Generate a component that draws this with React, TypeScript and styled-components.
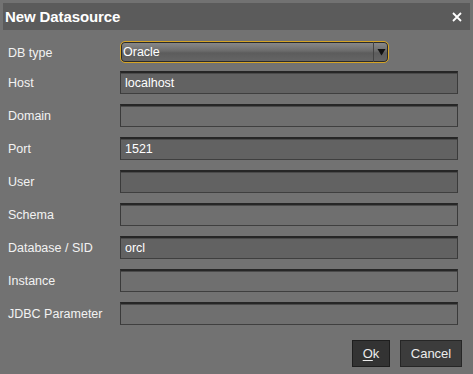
import React from "react";
import styled, { createGlobalStyle } from "styled-components";

const Global = createGlobalStyle`
  html, body { margin: 0; padding: 0; background: #727272; }
  body { font-family: "Liberation Sans", Arial, sans-serif; }
  * { box-sizing: border-box; }
`;

const Window = styled.div`
  width: 473px;
  height: 374px;
  background: #727272;
  padding: 3px 3px 0 3px;
  display: flex;
  flex-direction: column;
`;

const TitleBar = styled.div`
  height: 27px;
  background: #5b5b5b;
  display: flex;
  align-items: center;
  justify-content: space-between;
  padding: 0 8px 0 2px;
`;

const Title = styled.div`
  color: #ffffff;
  font-weight: bold;
  font-size: 15px;
  letter-spacing: -0.1px;
`;

const CloseButton = styled.button`
  width: 10px;
  height: 10px;
  padding: 0;
  border: 0;
  background: transparent;
  display: flex;
  align-items: center;
  justify-content: center;
`;

const Form = styled.div`
  display: flex;
  flex-direction: column;
  gap: 10px;
  padding: 11px 12px 0 5px;
`;

const Row = styled.div<{ $first?: boolean }>`
  display: grid;
  grid-template-columns: 112px 1fr;
  align-items: center;
  height: ${(p) => (p.$first ? "22px" : "23px")};
  margin-bottom: ${(p) => (p.$first ? "-2px" : "0")};
`;

const Label = styled.label`
  color: #f2f2f2;
  font-size: 12.5px;
  padding-top: 1px;
`;

const Combo = styled.div`
  width: 269px;
  height: 22px;
  border: 1.5px solid #d6a424;
  border-radius: 5px;
  box-shadow: inset 0 0 0 1px #2a2a2a;
  background: linear-gradient(#8c8c8c 0%, #6b6b6b 45%, #5c5c5c 55%, #666 100%);
  display: flex;
  align-items: stretch;
  overflow: hidden;
`;

const ComboText = styled.div`
  flex: 1;
  color: #ffffff;
  font-size: 12.5px;
  display: flex;
  align-items: center;
  padding-left: 2px;
`;

const ComboArrow = styled.div`
  width: 15px;
  border-left: 1px solid #444;
  display: flex;
  align-items: center;
  justify-content: center;
`;

const Field = styled.div<{ $dark?: boolean }>`
  height: 23px;
  background: ${(p) => (p.$dark ? "#626262" : "#6f6f6f")};
  border: 1px solid #3a3a3a;
  border-top: 2px solid #262626;
  border-bottom-color: #3f3f3f;
  box-shadow: inset 0 1px 0 #4a4a4a;
  color: #ffffff;
  font-size: 12.5px;
  display: flex;
  align-items: center;
  padding-left: 4px;
`;

const Footer = styled.div`
  display: flex;
  justify-content: flex-end;
  gap: 10px;
  padding: 15px 8px 0 0;
`;

const Button = styled.button<{ $w: number; $focus?: boolean }>`
  width: ${(p) => p.$w}px;
  height: 27px;
  background: ${(p) => (p.$focus ? "#333333" : "#3c3c3c")};
  border: 1px solid ${(p) => (p.$focus ? "#1e1e1e" : "#262626")};
  color: #ececec;
  font-family: "Liberation Sans", Arial, sans-serif;
  font-size: 13px;
  padding: 0;
`;

const U = styled.span`
  text-decoration: underline;
  text-underline-offset: 2px;
`;

const fields: { label: string; value?: string; dark?: boolean }[] = [
  { label: "Host", value: "localhost", dark: true },
  { label: "Domain" },
  { label: "Port", value: "1521", dark: true },
  { label: "User", dark: true },
  { label: "Schema" },
  { label: "Database / SID", value: "orcl", dark: true },
  { label: "Instance" },
  { label: "JDBC Parameter" },
];

export default function App() {
  return (
    <>
      <Global />
      <Window>
        <TitleBar>
          <Title>New Datasource</Title>
          <CloseButton aria-label="close">
            <svg width="10" height="10" viewBox="0 0 10 10">
              <path d="M1 1L9 9M9 1L1 9" stroke="#ffffff" strokeWidth="1.8" />
            </svg>
          </CloseButton>
        </TitleBar>
        <Form>
          <Row $first>
            <Label>DB type</Label>
            <Combo>
              <ComboText>Oracle</ComboText>
              <ComboArrow>
                <svg width="9" height="8" viewBox="0 0 9 8">
                  <path d="M0.5 1H8.5L4.5 7.5Z" fill="#111" />
                </svg>
              </ComboArrow>
            </Combo>
          </Row>
          {fields.map((f) => (
            <Row key={f.label}>
              <Label>{f.label}</Label>
              <Field $dark={f.dark}>{f.value ?? ""}</Field>
            </Row>
          ))}
        </Form>
        <Footer>
          <Button $w={38} $focus>
            <U>O</U>k
          </Button>
          <Button $w={62}>Cancel</Button>
        </Footer>
      </Window>
    </>
  );
}
